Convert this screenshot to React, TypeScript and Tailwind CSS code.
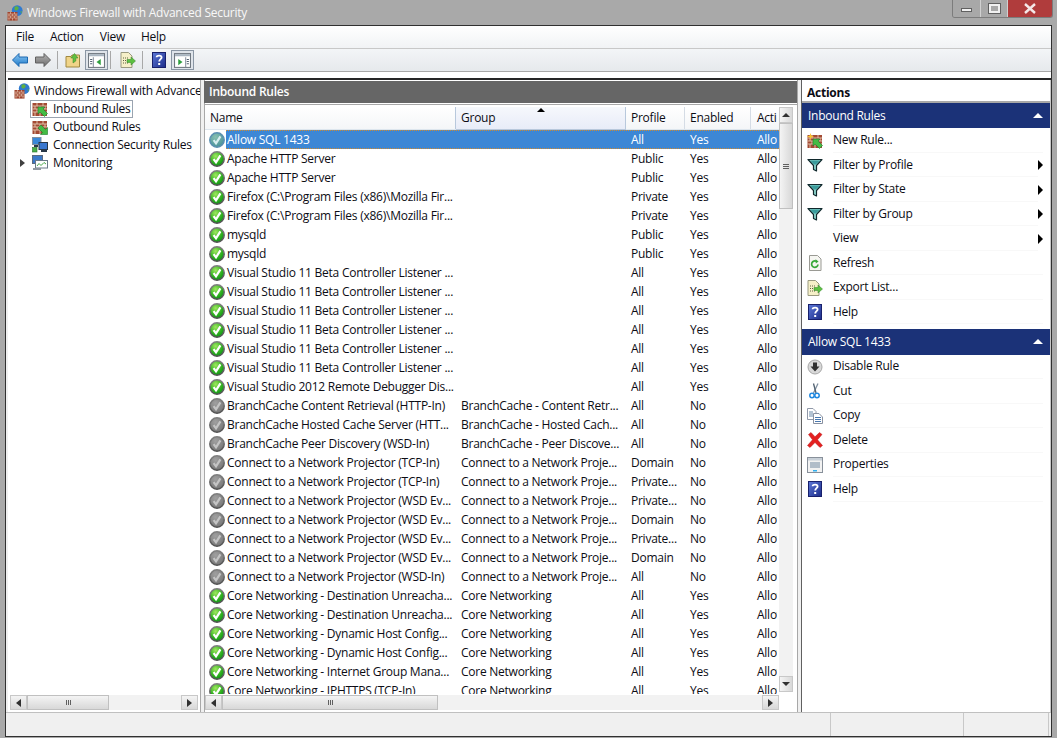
import React from "react";

const defs = (
  <svg width="0" height="0" className="absolute">
    <defs>
      <radialGradient id="g" cx="40%" cy="30%" r="75%"><stop offset="0" stopColor="#a0e860" /><stop offset="0.6" stopColor="#30b020" /><stop offset="1" stopColor="#0c8a18" /></radialGradient>
      <linearGradient id="ring" x1="0" y1="0" x2="0" y2="1"><stop offset="0" stopColor="#808080" /><stop offset="1" stopColor="#505050" /></linearGradient>
      <radialGradient id="gr" cx="40%" cy="30%" r="75%"><stop offset="0" stopColor="#a0a0a0" /><stop offset="1" stopColor="#747474" /></radialGradient>
      <radialGradient id="sel" cx="40%" cy="30%" r="75%"><stop offset="0" stopColor="#88c0b0" /><stop offset="1" stopColor="#458f98" /></radialGradient>
      <linearGradient id="blue" x1="0" y1="0" x2="0" y2="1"><stop offset="0" stopColor="#8cc8f4" /><stop offset="1" stopColor="#1c78c8" /></linearGradient>
      <linearGradient id="gray" x1="0" y1="0" x2="0" y2="1"><stop offset="0" stopColor="#b4b4b4" /><stop offset="1" stopColor="#6c6c6c" /></linearGradient>
      <linearGradient id="help" x1="0" y1="0" x2="1" y2="1"><stop offset="0" stopColor="#5c78d8" /><stop offset="1" stopColor="#1c2c88" /></linearGradient>
    </defs>
  </svg>
);

function Check({ kind }: { kind: "on" | "off" | "sel" }) {
  const fill = kind === "on" ? "url(#g)" : kind === "off" ? "url(#gr)" : "url(#sel)";
  const ring = kind === "sel" ? "#5a8fb0" : "url(#ring)";
  const mark = kind === "off" ? "#c4c4c4" : kind === "sel" ? "#d8eef0" : "#ffffff";
  return (
    <svg width="16" height="16" viewBox="0 0 16 16" className="shrink-0">
      <circle cx="8" cy="8" r="7.2" fill={fill} stroke={ring} strokeWidth="1.5" />
      <path d="M4.6 8.2 L7 11.4 L11.4 4.4" fill="none" stroke={mark} strokeWidth="2.2" />
    </svg>
  );
}

function Bricks() {
  return (
    <g>
      <rect x="0.5" y="2" width="14.5" height="13" fill="#a34a34" />
      <path d="M0.5 5H15M0.5 8H15M0.5 11H15M5 2V5M11 2V5M3 5V8M8 5V8M13 5V8M5 8V11M11 8V11M3 11V15M8 11V15M13 11V15" stroke="#e4c8b0" strokeWidth="0.9" />
    </g>
  );
}

function FirewallGlobe() {
  return (
    <svg width="16" height="16" viewBox="0 0 16 16" className="shrink-0">
      <circle cx="10.2" cy="5.6" r="5.4" fill="#2f7ad0" />
      <path d="M7.5 2c2.5-1.6 4.8 0 4 1.8S8.5 6.4 7.5 4.5zM13.5 6c1.2-.5 1.8 1.2.6 2.6z" fill="#60b040" />
      <rect x="0.5" y="7" width="10" height="8.6" fill="#a0442e" />
      <path d="M.5 9H10.5M.5 11H10.5M.5 13H10.5M3.5 7V9M7.5 7V9M2 9V11M5.5 9V11M9 9V11M3.5 11V13M7.5 11V13M2 13V15.5M5.5 13V15.5M9 13V15.5" stroke="#dcb8a0" strokeWidth="0.7" />
    </svg>
  );
}

function Wall({ dir }: { dir: "in" | "out" | "new" }) {
  return (
    <svg width="16" height="16" viewBox="0 0 16 16" className="shrink-0">
      <Bricks />
      {dir === "in" && <path d="M6 6H13L11 8L15.5 12.5L12.5 15.5L8 11L6 13Z" fill="#44bc44" stroke="#1f7a2a" strokeWidth="0.6" />}
      {dir === "out" && <path d="M15.5 15.5H8.5L10.5 13.5L6 9L9 6L13.5 10.5L15.5 8.5Z" fill="#44bc44" stroke="#1f7a2a" strokeWidth="0.6" />}
      {dir === "new" && (
        <g>
          <path d="M6 6H13L11 8L15.5 12.5L12.5 15.5L8 11L6 13Z" fill="#44bc44" stroke="#1f7a2a" strokeWidth="0.6" />
          <path d="M3.5 0L4.3 2.4L7 3.5L4.3 4.6L3.5 7L2.7 4.6L0 3.5L2.7 2.4Z" fill="#f8c030" />
        </g>
      )}
    </svg>
  );
}

function Monitors({ chart }: { chart?: boolean }) {
  return (
    <svg width="16" height="16" viewBox="0 0 16 16" className="shrink-0">
      {chart ? (
        <g>
          <rect x="0.5" y="0.5" width="10" height="8" fill="#3a78c8" stroke="#5a6a80" />
          <rect x="3.5" y="5.5" width="12" height="7.5" fill="#fff" stroke="#6a7a88" />
          <path d="M5 11L7 8.5L9 10.5L12 7.5L14 9" fill="none" stroke="#48a848" strokeWidth="1" />
          <rect x="1" y="13" width="8" height="2" fill="#9098a0" />
        </g>
      ) : (
        <g>
          <rect x="0.5" y="0.5" width="8.5" height="7" fill="#3a88d8" stroke="#8090a0" />
          <rect x="7" y="5.5" width="8.5" height="7" fill="#3a78d0" stroke="#283848" />
          <rect x="0.5" y="10.5" width="4.5" height="4.5" fill="#48b048" stroke="#287028" strokeWidth="0.6" />
          <rect x="9" y="13" width="6" height="2" fill="#283848" />
          <rect x="2" y="8" width="4" height="2" fill="#283848" />
        </g>
      )}
    </svg>
  );
}

function Funnel() {
  return (
    <svg width="16" height="16" viewBox="0 0 16 16" className="shrink-0">
      <path d="M1 2.5H15L9.5 8.5V14L6.5 12.5V8.5Z" fill="#8fd8d0" stroke="#10282c" strokeWidth="1.2" strokeLinejoin="round" />
      <path d="M3 3.4H13L9 7.4H7Z" fill="#3a9c9c" />
    </svg>
  );
}

function Help() {
  return (
    <svg width="16" height="16" viewBox="0 0 16 16" className="shrink-0">
      <rect x="1.5" y="0.5" width="13" height="15" fill="url(#help)" stroke="#18206c" />
      <path d="M5.6 5.2C5.6 3 10.6 3 10.6 5.4C10.6 7.2 8.2 7.2 8.2 9.6" fill="none" stroke="#fff" strokeWidth="1.8" />
      <rect x="7.2" y="11" width="2" height="2" fill="#fff" />
    </svg>
  );
}

function Refresh() {
  return (
    <svg width="16" height="16" viewBox="0 0 16 16" className="shrink-0">
      <path d="M2.5 0.5H10.5L14 4V15.5H2.5Z" fill="#f6f6f2" stroke="#9a9a94" />
      <path d="M11 9.5A3.2 3.2 0 1 1 9.5 6.4" fill="none" stroke="#38a838" strokeWidth="1.7" />
      <path d="M8.5 4.2L11.6 6.4L8.8 8.4Z" fill="#38a838" />
    </svg>
  );
}

function ExportIcon() {
  return (
    <svg width="16" height="16" viewBox="0 0 16 16" className="shrink-0">
      <path d="M1 0.5H8.5L12 4V15.5H1Z" fill="#f6f0c8" stroke="#9a9a80" />
      <path d="M3 6H8M3 8.5H7M3 11H8" stroke="#606040" strokeWidth="1" strokeDasharray="1 1" />
      <path d="M7 7.5H11V5L15.5 9L11 13V10.5H7Z" fill="#5cc040" stroke="#308028" strokeWidth="0.5" />
    </svg>
  );
}

function Disable() {
  return (
    <svg width="16" height="16" viewBox="0 0 16 16" className="shrink-0">
      <circle cx="8" cy="8" r="7" fill="#d8d8d8" stroke="#a8a8a8" />
      <path d="M6 3.5H10V7.5H12.5L8 12.5L3.5 7.5H6Z" fill="#303030" />
    </svg>
  );
}

function Cut() {
  return (
    <svg width="16" height="16" viewBox="0 0 16 16" className="shrink-0">
      <path d="M6.5 10L11 0.5" stroke="#8090a0" strokeWidth="1.3" />
      <path d="M9 10L6.5 0.5" stroke="#506070" strokeWidth="1.3" />
      <circle cx="5" cy="12.5" r="2.2" fill="none" stroke="#2088e0" strokeWidth="1.5" />
      <circle cx="10" cy="12.5" r="2.2" fill="none" stroke="#2088e0" strokeWidth="1.5" />
    </svg>
  );
}

function Copy() {
  return (
    <svg width="16" height="16" viewBox="0 0 16 16" className="shrink-0">
      <path d="M0.5 0.5H6L9 3.5V11.5H0.5Z" fill="#fff" stroke="#9098a8" />
      <path d="M2 4H6M2 6H6M2 8H6" stroke="#6888a8" />
      <path d="M6.5 5.5H12L15.5 9V15.5H6.5Z" fill="#fff" stroke="#8890a0" />
      <path d="M8 9.5H14M8 11.5H14M8 13.5H14" stroke="#4878b0" />
    </svg>
  );
}

function RedX() {
  return (
    <svg width="16" height="16" viewBox="0 0 16 16" className="shrink-0">
      <path d="M1.5 2.5L4 .5L8 4.8L12.5 .5L15 2.5L10.5 7.8L15.5 13.5L13 15.5L8 10.5L3 15.5L.5 13.5L5.5 7.8Z" fill="#e42020" stroke="#b81818" strokeWidth="0.5" />
    </svg>
  );
}

function Props() {
  return (
    <svg width="16" height="16" viewBox="0 0 16 16" className="shrink-0">
      <rect x="0.5" y="0.5" width="15" height="15" fill="#f2f2f2" stroke="#88909a" />
      <rect x="1" y="1" width="14" height="2.5" fill="#c8d0d8" />
      <path d="M3 6H13M3 8H13M3 10H13" stroke="#7088a0" />
      <rect x="6" y="13" width="4" height="1.5" fill="#30b0f0" />
    </svg>
  );
}

function ToolArrow({ back }: { back: boolean }) {
  return (
    <svg width="16" height="14" viewBox="0 0 16 14">
      <path
        d={back ? "M7 0.5V4H15.5V10H7V13.5L0.5 7Z" : "M9 0.5V4H0.5V10H9V13.5L15.5 7Z"}
        fill={back ? "url(#blue)" : "url(#gray)"}
        stroke={back ? "#1c68b0" : "#606060"}
      />
    </svg>
  );
}

function Folder() {
  return (
    <svg width="16" height="16" viewBox="0 0 16 16">
      <path d="M1 4.5H6L7 3H14.5V15H1Z" fill="#f0d488" stroke="#a08840" />
      <path d="M8 11L8 6L5.8 6L9.5 1.5L13 6L10.8 6V9Z" fill="#60c040" stroke="#388028" strokeWidth="0.5" />
    </svg>
  );
}

function PaneIcon({ right }: { right?: boolean }) {
  return (
    <svg width="17" height="15" viewBox="0 0 16 14">
      <rect x="0.5" y="0.5" width="15" height="13" fill="#fff" stroke="#707880" />
      <rect x="1" y="1" width="14" height="2" fill="#a8b4c0" />
      {right ? (
        <>
          <path d="M11 4V13" stroke="#8890a0" />
          <path d="M4 5.5L8 8.5L4 11.5Z" fill="#30a040" />
          <path d="M12 6H14M12 8H14M12 10H14" stroke="#506070" />
        </>
      ) : (
        <>
          <path d="M5 4V13" stroke="#8890a0" />
          <path d="M12 5.5L8 8.5L12 11.5Z" fill="#30a040" />
          <path d="M2 6H4M2 8H4M2 10H4" stroke="#506070" />
        </>
      )}
    </svg>
  );
}

function ToolBtn({ children, on, className }: { children: React.ReactNode; on?: boolean; className?: string }) {
  return (
    <div className={"w-[23px] h-[20px] flex items-center justify-center shrink-0 " + (on ? "border border-[#8a96a4] bg-[#dfe4ea] " : "") + (className || "")}>
      {children}
    </div>
  );
}

function TreeRow({ icon, label, sel, expander }: { icon: React.ReactNode; label: string; sel?: boolean; expander?: boolean }) {
  return (
    <div className="h-[18px] flex items-center pl-[9px] whitespace-nowrap">
      <div className="w-[11px] flex items-center shrink-0">
        {expander && <div className="w-0 h-0 ml-[1px] border-y-[4px] border-y-transparent border-l-[5px] border-l-[#404040]" />}
      </div>
      <div className={"flex items-center h-[18px] gap-[5px] " + (sel ? "border border-[#9aa4b0] pl-[1px] pr-[2px]" : "pl-[2px] pr-[3px]")}>
        {icon}
        <span>{label}</span>
      </div>
    </div>
  );
}

function Grip({ vertical }: { vertical?: boolean }) {
  return vertical ? (
    <div className="flex flex-col gap-[1px] w-[6px]">
      <div className="h-[1px] bg-[#606060]" />
      <div className="h-[1px] bg-[#606060]" />
      <div className="h-[1px] bg-[#606060]" />
    </div>
  ) : (
    <div className="flex gap-[1px] h-[5px]">
      <div className="w-[1px] bg-[#606060]" />
      <div className="w-[1px] bg-[#606060]" />
      <div className="w-[1px] bg-[#606060]" />
    </div>
  );
}

function HScroll({ thumb, className }: { thumb: string; className: string }) {
  return (
    <div className={"h-[15px] flex bg-[#f2f2f2] shrink-0 " + className}>
      <div className="w-[17px] shrink-0 bg-gradient-to-b from-[#f4f4f4] to-[#d8d8d8] border border-[#c8c8c8] flex items-center justify-center">
        <div className="w-0 h-0 border-y-[4px] border-y-transparent border-r-[5px] border-r-[#303030]" />
      </div>
      <div className={"shrink-0 bg-gradient-to-b from-[#f4f4f4] to-[#d8d8d8] border border-[#c0c0c0] flex items-center justify-center " + thumb}>
        <Grip />
      </div>
      <div className="flex-1" />
      <div className="w-[17px] shrink-0 bg-gradient-to-b from-[#f4f4f4] to-[#d8d8d8] border border-[#c8c8c8] flex items-center justify-center">
        <div className="w-0 h-0 border-y-[4px] border-y-transparent border-l-[5px] border-l-[#303030]" />
      </div>
    </div>
  );
}

function Head({ label, cls }: { label: string; cls: string }) {
  return (
    <div className={"h-full shrink-0 flex items-center pl-[5px] border-r overflow-hidden whitespace-nowrap " + cls}>
      {label}
    </div>
  );
}

type Row = [string, string, string, string];
const V = "Visual Studio 11 Beta Controller Listener ...";
const C = "Connect to a Network Projector ";
const CG = "Connect to a Network Proje...";
const rows: Row[] = [
  ["Allow SQL 1433", "", "All", "Yes"],
  ["Apache HTTP Server", "", "Public", "Yes"],
  ["Apache HTTP Server", "", "Public", "Yes"],
  ["Firefox (C:\\Program Files (x86)\\Mozilla Fir...", "", "Private", "Yes"],
  ["Firefox (C:\\Program Files (x86)\\Mozilla Fir...", "", "Private", "Yes"],
  ["mysqld", "", "Public", "Yes"],
  ["mysqld", "", "Public", "Yes"],
  [V, "", "All", "Yes"],
  [V, "", "All", "Yes"],
  [V, "", "All", "Yes"],
  [V, "", "All", "Yes"],
  [V, "", "All", "Yes"],
  [V, "", "All", "Yes"],
  ["Visual Studio 2012 Remote Debugger Dis...", "", "All", "Yes"],
  ["BranchCache Content Retrieval (HTTP-In)", "BranchCache - Content Retr...", "All", "No"],
  ["BranchCache Hosted Cache Server (HTT...", "BranchCache - Hosted Cach...", "All", "No"],
  ["BranchCache Peer Discovery (WSD-In)", "BranchCache - Peer Discove...", "All", "No"],
  [C + "(TCP-In)", CG, "Domain", "No"],
  [C + "(TCP-In)", CG, "Private...", "No"],
  [C + "(WSD Ev...", CG, "Private...", "No"],
  [C + "(WSD Ev...", CG, "Domain", "No"],
  [C + "(WSD Ev...", CG, "Private...", "No"],
  [C + "(WSD Ev...", CG, "Domain", "No"],
  [C + "(WSD-In)", CG, "All", "No"],
  ["Core Networking - Destination Unreacha...", "Core Networking", "All", "Yes"],
  ["Core Networking - Destination Unreacha...", "Core Networking", "All", "Yes"],
  ["Core Networking - Dynamic Host Config...", "Core Networking", "All", "Yes"],
  ["Core Networking - Dynamic Host Config...", "Core Networking", "All", "Yes"],
  ["Core Networking - Internet Group Mana...", "Core Networking", "All", "Yes"],
  ["Core Networking - IPHTTPS (TCP-In)", "Core Networking", "All", "Yes"],
];

function ActionItem({ icon, label, arrow }: { icon?: React.ReactNode; label: string; arrow?: boolean }) {
  return (
    <div className="h-[24.5px] flex items-center pl-[5px] pr-[7px]">
      <div className="w-[16px] h-[16px] shrink-0">{icon}</div>
      <div className="ml-[10px] h-full flex items-center flex-1 border-b border-[#f8f8f8]">{label}</div>
      {arrow && <div className="w-0 h-0 border-y-[5px] border-y-transparent border-l-[5px] border-l-black" />}
    </div>
  );
}

function Band({ label }: { label: string }) {
  return (
    <div className="h-[25.3px] bg-[#1b3278] text-white flex items-center pl-[6px] pr-[7px] justify-between shrink-0">
      <span>{label}</span>
      <div className="w-0 h-0 border-x-[5px] border-x-transparent border-b-[5px] border-b-white" />
    </div>
  );
}

export default function App() {
  return (
    <div className="w-[1057px] h-[738px] bg-[#a9a9a9] flex flex-col overflow-hidden font-['Open_Sans','Noto_Sans',sans-serif] text-[12px] tracking-[-0.25px] text-[#0c0c14]">
      {defs}
      <div className="h-[25px] shrink-0 flex items-start justify-between pl-[7px] pr-[4px]">
        <div className="flex items-center gap-[4px] h-[24px] pt-[1px] text-[#f8f8f8]">
          <FirewallGlobe />
          <span>Windows Firewall with Advanced Security</span>
        </div>
        <div className="flex h-[18px] border border-[#7c7c7c] border-t-0 rounded-b-[3px] overflow-hidden">
          <div className="w-[28px] bg-[#a8a8a8] border-r border-[#d0d0d0] flex items-center justify-center">
            <div className="w-[11px] h-[4px] mt-[3px] bg-[#f0f0f0] border border-[#606060]" />
          </div>
          <div className="w-[27px] bg-[#a8a8a8] border-r border-[#d0d0d0] flex items-center justify-center">
            <div className="w-[11px] h-[9px] border-[2px] border-[#f0f0f0] outline outline-1 outline-[#606060]" />
          </div>
          <div className="w-[44px] bg-[#b03c3c] flex items-center justify-center">
            <svg width="12" height="11" viewBox="0 0 12 11"><path d="M1 1L11 10M11 1L1 10" stroke="#f4e8e8" strokeWidth="2.4" /></svg>
          </div>
        </div>
      </div>

      <div className="flex-1 mx-[5px] mb-[1px] border border-[#303030] bg-white flex flex-col min-h-0">
        <div className="h-[23px] shrink-0 bg-gradient-to-b from-white to-[#f1f3f5] border-b border-[#c8c8c8] flex items-center pl-[10px] gap-[16px]">
          <span>File</span>
          <span>Action</span>
          <span>View</span>
          <span>Help</span>
        </div>
        <div className="h-[23px] shrink-0 bg-gradient-to-b from-[#f3f5f7] to-[#e6e9ec] border-b border-[#a8a8a8] flex items-center pl-[2px]">
          <ToolBtn><ToolArrow back /></ToolBtn>
          <ToolBtn><ToolArrow back={false} /></ToolBtn>
          <div className="w-[1px] h-[18px] bg-[#a8a8a8] mx-[3px]" />
          <ToolBtn><Folder /></ToolBtn>
          <ToolBtn on className="ml-[1px]"><PaneIcon /></ToolBtn>
          <div className="w-[1px] h-[18px] bg-[#a8a8a8] ml-[2px] mr-[5px]" />
          <ToolBtn><ExportIcon /></ToolBtn>
          <div className="w-[1px] h-[18px] bg-[#a8a8a8] ml-[3px] mr-[4px]" />
          <ToolBtn><Help /></ToolBtn>
          <ToolBtn on className="ml-[1px]"><PaneIcon right /></ToolBtn>
        </div>
        <div className="h-[6px] shrink-0 bg-white" />
        <div className="h-[2px] shrink-0 bg-[#262626] ml-[2px]" />

        <div className="flex-1 min-h-0 flex gap-[3px] pl-[2px] bg-[#f0f0f0]">
          <div className="w-[193px] shrink-0 bg-white border-r border-[#a8a8a8] flex flex-col pl-[2px] pb-[2px] overflow-hidden">
            <div className="flex-1 min-h-0 pt-[2px] overflow-hidden">
              <div className="h-[18px] flex items-center pl-[4px] gap-[4px] whitespace-nowrap overflow-hidden">
                <FirewallGlobe />
                <span>Windows Firewall with Advanced Security</span>
              </div>
              <TreeRow icon={<Wall dir="in" />} label="Inbound Rules" sel />
              <TreeRow icon={<Wall dir="out" />} label="Outbound Rules" />
              <TreeRow icon={<Monitors />} label="Connection Security Rules" />
              <TreeRow icon={<Monitors chart />} label="Monitoring" expander />
            </div>
            <HScroll thumb="w-[82px]" className="mr-[2px]" />
          </div>

          <div className="w-[594px] shrink-0 flex flex-col bg-white border-x border-[#a8a8a8]">
            <div className="h-[22px] mt-[1px] -ml-[1px] shrink-0 bg-[#666666] text-white font-semibold flex items-center pl-[5px]">Inbound Rules</div>
            <div className="flex-1 min-h-0 mt-[1px] border-t border-[#a8a8a8] pt-[2px] pb-[2px] flex">
              <div className="w-[574px] flex flex-col min-h-0">
                <div className="h-[23px] shrink-0 flex bg-gradient-to-b from-white to-[#f4f6f8] border-b border-[#dde6ee]">
                  <Head label="Name" cls="w-[251px] border-[#b8c8dc]" />
                  <div className="w-[170px] h-[23px] shrink-0 relative flex items-center pl-[5px] border-r border-b border-[#b8c8dc] bg-gradient-to-b from-[#f6f8fc] to-[#e8ecf8]">
                    Group
                    <div className="absolute left-[81px] top-[1px] w-0 h-0 border-x-[4px] border-x-transparent border-b-[4px] border-b-black" />
                  </div>
                  <Head label="Profile" cls="w-[59px] border-[#d5dce5]" />
                  <Head label="Enabled" cls="w-[66px] border-[#d5dce5]" />
                  <div className="w-[26px] h-full shrink-0 flex items-center pl-[6px] overflow-hidden whitespace-nowrap">Action</div>
                </div>
                <div className="flex-1 min-h-0 overflow-hidden">
                  {rows.map((r, i) => {
                    const selected = i === 0;
                    return (
                      <div key={i} className="h-[19px] flex items-center whitespace-nowrap">
                        <div className="w-[21px] pl-[4px] shrink-0"><Check kind={selected ? "sel" : r[3] === "Yes" ? "on" : "off"} /></div>
                        <div className={"flex-1 h-full flex items-center min-w-0 " + (selected ? "bg-[#3d87d5] text-white border-y border-dotted border-[#d08a30]" : "")}>
                          <div className="w-[230px] shrink-0 pl-[1px] overflow-hidden">{r[0]}</div>
                          <div className="w-[170px] shrink-0 pl-[5px] overflow-hidden">{r[1]}</div>
                          <div className="w-[59px] shrink-0 pl-[5px] overflow-hidden">{r[2]}</div>
                          <div className="w-[66px] shrink-0 pl-[5px] overflow-hidden">{r[3]}</div>
                          <div className="w-[26px] shrink-0 pl-[6px] overflow-hidden">Allow</div>
                        </div>
                      </div>
                    );
                  })}
                </div>
                <HScroll thumb="w-[216px]" className="mt-[1px]" />
              </div>
              <div className="w-[14px] h-[585px] flex flex-col bg-[#f2f2f2] shrink-0">
                <div className="h-[16px] bg-gradient-to-r from-[#f4f4f4] to-[#d8d8d8] border border-[#c8c8c8] flex items-center justify-center shrink-0">
                  <div className="w-0 h-0 border-x-[4px] border-x-transparent border-b-[4px] border-b-[#303030]" />
                </div>
                <div className="h-[86px] bg-gradient-to-r from-[#f4f4f4] to-[#d8d8d8] border border-[#c0c0c0] flex items-center justify-center shrink-0">
                  <Grip vertical />
                </div>
                <div className="flex-1" />
                <div className="h-[16px] bg-gradient-to-r from-[#f4f4f4] to-[#d8d8d8] border border-[#c8c8c8] flex items-center justify-center shrink-0">
                  <div className="w-0 h-0 border-x-[4px] border-x-transparent border-t-[4px] border-t-[#303030]" />
                </div>
              </div>
            </div>
          </div>

          <div className="flex-1 min-w-0 bg-white border-l border-[#606060] border-r border-r-[#c8c8c8] flex flex-col">
            <div className="h-[22px] mt-[1px] pt-[3px] shrink-0 border-b-2 border-[#a8a8a8] font-bold flex items-center pl-[5px]">Actions</div>
            <Band label="Inbound Rules" />
            <ActionItem icon={<Wall dir="new" />} label="New Rule..." />
            <ActionItem icon={<Funnel />} label="Filter by Profile" arrow />
            <ActionItem icon={<Funnel />} label="Filter by State" arrow />
            <ActionItem icon={<Funnel />} label="Filter by Group" arrow />
            <ActionItem label="View" arrow />
            <ActionItem icon={<Refresh />} label="Refresh" />
            <ActionItem icon={<ExportIcon />} label="Export List..." />
            <ActionItem icon={<Help />} label="Help" />
            <div className="h-[5px] shrink-0" />
            <Band label="Allow SQL 1433" />
            <ActionItem icon={<Disable />} label="Disable Rule" />
            <ActionItem icon={<Cut />} label="Cut" />
            <ActionItem icon={<Copy />} label="Copy" />
            <ActionItem icon={<RedX />} label="Delete" />
            <ActionItem icon={<Props />} label="Properties" />
            <ActionItem icon={<Help />} label="Help" />
          </div>
        </div>

        <div className="h-[24px] shrink-0 bg-[#f0f0f0] border-t border-[#c0c0c0] flex pl-[2px]">
          <div className="flex-1 border-r border-[#c8c8c8]" />
          <div className="w-[133px] border-r border-[#c8c8c8]" />
          <div className="w-[85px] border-r border-[#c8c8c8] mr-[2px]" />
        </div>
      </div>
    </div>
  );
}
